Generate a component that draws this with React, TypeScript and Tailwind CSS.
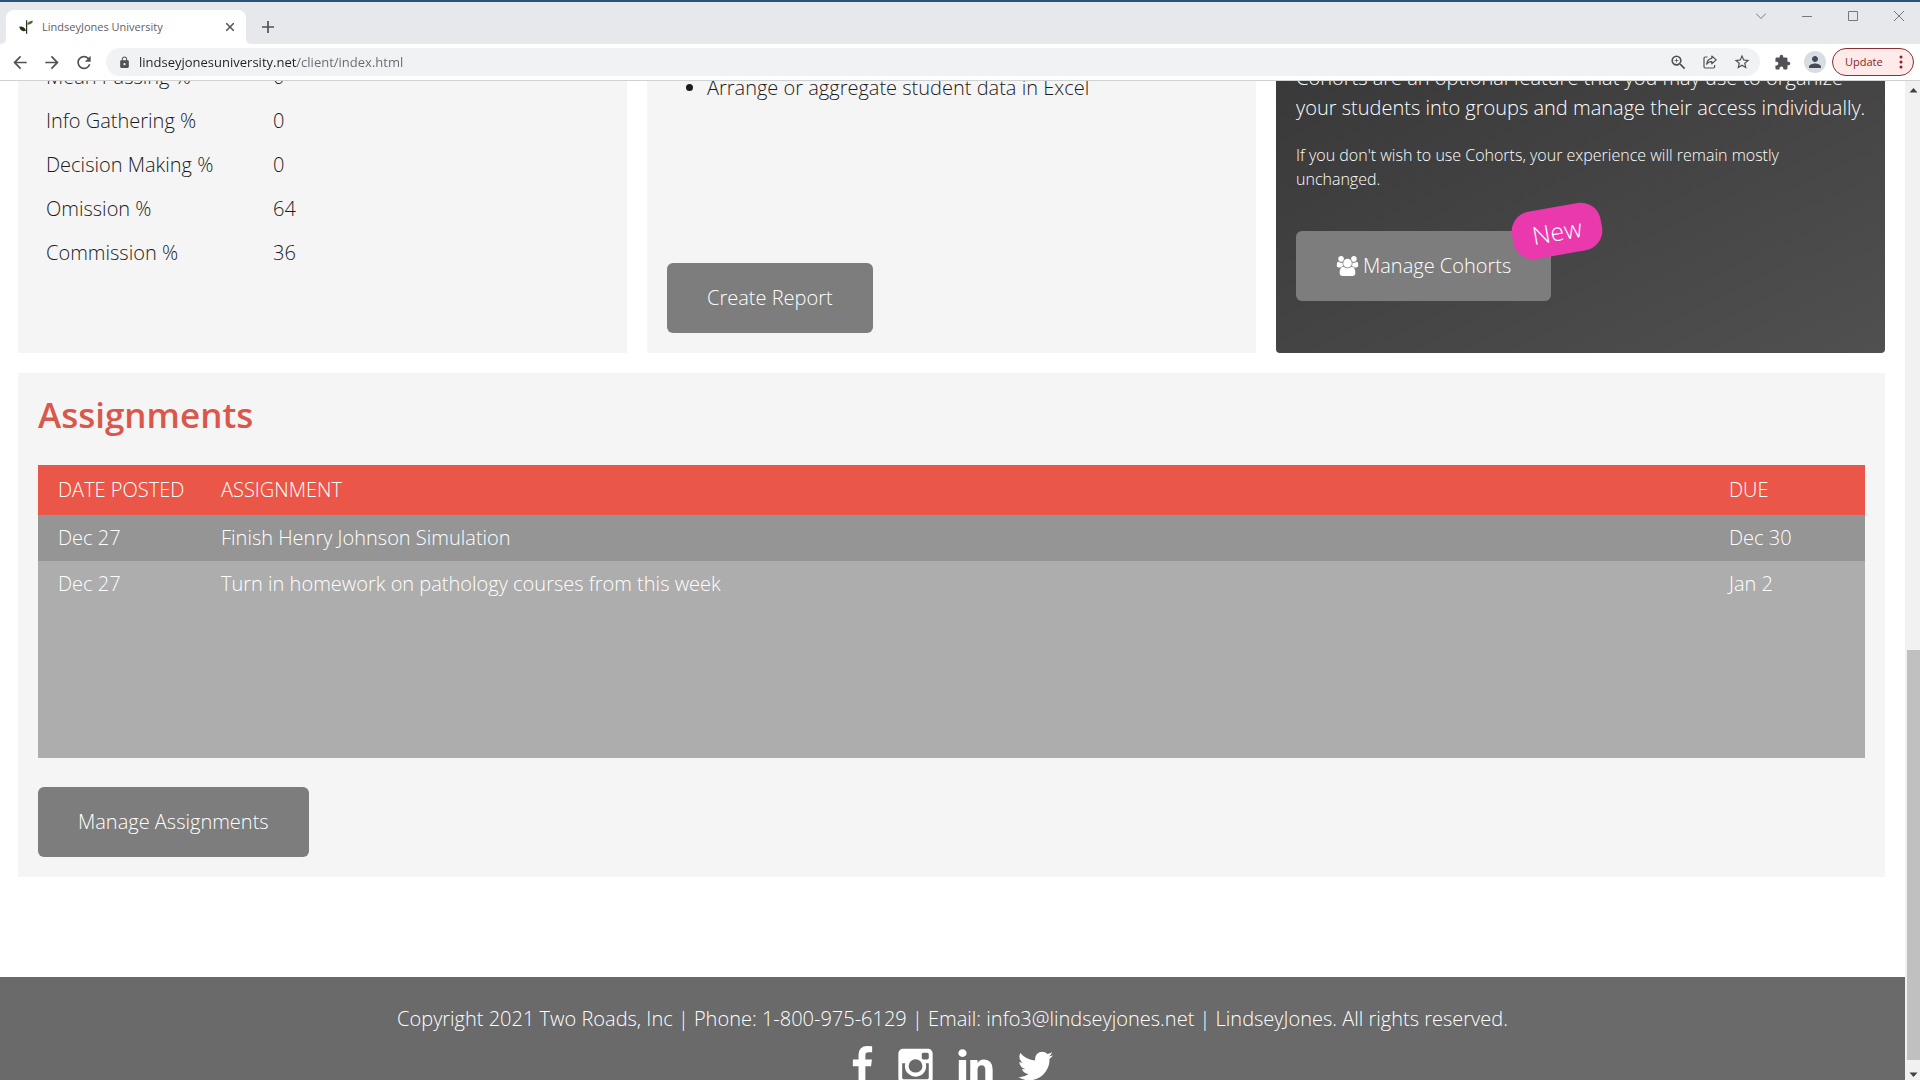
import type { ReactNode } from "react";
import {
  MdArrowBack,
  MdArrowForward,
  MdExtension,
  MdLock,
  MdPerson,
  MdRefresh,
  MdStarBorder,
  MdZoomIn,
} from "react-icons/md";

const stats = [
  { label: "Mean Passing %", value: 0 },
  { label: "Info Gathering %", value: 0 },
  { label: "Decision Making %", value: 0 },
  { label: "Omission %", value: 64 },
  { label: "Commission %", value: 36 },
];

const assignments = [
  { posted: "Dec 27", title: "Finish Henry Johnson Simulation", due: "Dec 30" },
  {
    posted: "Dec 27",
    title: "Turn in homework on pathology courses from this week",
    due: "Jan 2",
  },
];

const socials = [
  {
    name: "Facebook",
    viewBox: "441 0 941 1792",
    className: "h-10 w-[21px]",
    path: "M1343 12v264h-157q-86 0-116 36t-30 108v189h293l-39 296h-254v759h-306v-759h-255v-296h255v-218q0-186 104-288.5t277-102.5q147 0 228 12z",
  },
  {
    name: "Instagram",
    viewBox: "112 0 1568 1792",
    className: "h-10 w-[35px]",
    path: "M1490 1426v-648h-135q20 63 20 131 0 126-64 232.5t-174 168.5-240 62q-197 0-337-135.5t-140-327.5q0-68 20-131h-141v648q0 26 17.5 43.5t43.5 17.5h1069q25 0 43-17.5t18-43.5zm-284-533q0-124-90.5-211.5t-218.5-87.5q-127 0-217.5 87.5t-90.5 211.5 90.5 211.5 217.5 87.5q128 0 218.5-87.5t90.5-211.5zm284-360v-165q0-28-20-48.5t-49-20.5h-174q-29 0-49 20.5t-20 48.5v165q0 29 20 49t49 20h174q29 0 49-20t20-49zm174-208v1142q0 81-58 139t-139 58h-1142q-81 0-139-58t-58-139v-1142q0-81 58-139t139-58h1142q81 0 139 58t58 139z",
  },
  {
    name: "LinkedIn",
    viewBox: "112 0 1568 1792",
    className: "h-10 w-[35px]",
    path: "M477 625v991h-330v-991h330zm21-306q1 73-50.5 122t-135.5 49h-2q-82 0-132-49t-50-122q0-74 51.5-122.5t134.5-48.5 133 48.5 51 122.5zm1166 729v568h-329v-530q0-105-40.5-164.5t-126.5-59.5q-63 0-105.5 34.5t-63.5 85.5q-11 30-11 81v553h-329q2-399 2-647t-1-296l-1-48h329v144h-2q20-32 41-56t56.5-52 87-43.5 114.5-15.5q171 0 275 113.5t104 332.5z",
  },
  {
    name: "Twitter",
    viewBox: "112 0 1568 1792",
    className: "h-10 w-[35px]",
    path: "M1684 408q-67 98-162 167 1 14 1 42 0 130-38 259.5t-115.5 248.5-184.5 210.5-258 146-323 54.5q-271 0-496-145 35 4 78 4 225 0 401-138-105-2-188-64.5t-114-159.5q33 5 61 5 43 0 85-11-112-23-185.5-111.5t-73.5-205.5v-4q68 38 146 41-66-44-105-115t-39-154q0-88 44-163 121 149 294.5 238.5t371.5 99.5q-8-38-8-74 0-134 94.5-228.5t228.5-94.5q140 0 236 102 109-21 205-78-37 115-142 178 93-10 186-50z",
  },
];

function UsersIcon() {
  return (
    <svg viewBox="0 0 2048 1792" className="h-5 w-[23px] fill-current" aria-hidden="true">
      <path d="M657 896q-162 5-265 128h-134q-82 0-138-40.5t-56-118.5q0-353 124-353 6 0 43.5 21t97.5 42.5 119 21.5q67 0 133-23-5 37-5 66 0 139 81 256zm1071 637q0 120-73 189.5t-194 69.5h-874q-121 0-194-69.5t-73-189.5q0-53 3.5-103.5t14-109 26.5-108.5 43-97.5 62-81 85.5-53.5 111.5-20q10 0 43 21.5t73 48 107 48 135 21.5 135-21.5 107-48 73-48 43-21.5q61 0 111.5 20t85.5 53.5 62 81 43 97.5 26.5 108.5 14 109 3.5 103.5zm-1024-1277q0 106-75 181t-181 75-181-75-75-181 75-181 181-75 181 75 75 181zm704 384q0 159-112.5 271.5t-271.5 112.5-271.5-112.5-112.5-271.5 112.5-271.5 271.5-112.5 271.5 112.5 112.5 271.5zm576 225q0 78-56 118.5t-138 40.5h-134q-103-123-265-128 81-117 81-256 0-29-5-66 66 23 133 23 59 0 119-21.5t97.5-42.5 43.5-21q124 0 124 353zm-128-609q0 106-75 181t-181 75-181-75-75-181 75-181 181-75 181 75 75 181z" />
    </svg>
  );
}

function LeafIcon() {
  return (
    <svg viewBox="0 0 16 16" className="size-4" aria-hidden="true">
      <path d="M8.600 1.200v13.600" stroke="#2c2f20" strokeWidth="1.2" fill="none" />
      <path d="M1.200 7.600c3-.4 6 .8 6.800 4.200-3.600 1.400-6-.6-6.800-4.200z" fill="#23301a" />
      <path d="M9 5.600c.4-2.400 2.800-3.800 6-3.800-.4 2.800-2.800 4.200-6 3.800z" fill="#4d6b2c" />
    </svg>
  );
}

function IconButton({ label, children }: { label: string; children: ReactNode }) {
  return (
    <button
      type="button"
      aria-label={label}
      className="flex size-5 shrink-0 items-center justify-center"
    >
      {children}
    </button>
  );
}

function TabStrip() {
  return (
    <header className="flex h-11 items-end border-t-2 border-[#2b5278] bg-[#e7e8ec] pl-1.5">
      <div className="relative flex h-[34px] w-60 items-center rounded-t-lg bg-white pr-2.5 pl-3">
        <svg viewBox="0 0 6 6" className="absolute bottom-0 -left-1.5 size-1.5 fill-white">
          <path d="M6 0v6H0q6 0 6-6z" />
        </svg>
        <svg viewBox="0 0 6 6" className="absolute -right-1.5 bottom-0 size-1.5 fill-white">
          <path d="M0 0v6h6q-6 0-6-6z" />
        </svg>
        <LeafIcon />
        <span className="ml-2 flex-1 text-[11px] leading-4 text-[#5f6063]">
          LindseyJones University
        </span>
        <button type="button" aria-label="Close tab" className="p-0.5">
          <svg viewBox="0 0 8 8" className="size-2 stroke-[#505256]" strokeWidth="1.5">
            <path d="M0 0l8 8M8 0l-8 8" />
          </svg>
        </button>
      </div>
      <button type="button" aria-label="New tab" className="mb-[11px] ml-4">
        <svg viewBox="0 0 12 12" className="size-3 stroke-[#505256]" strokeWidth="1.7">
          <path d="M6 0v12M0 6h12" />
        </svg>
      </button>
      <div className="mr-4 mb-[23px] ml-auto flex items-center gap-9 stroke-[#77797d]">
        <button type="button" aria-label="Search tabs">
          <svg viewBox="0 0 10 10" className="size-2.5 fill-none stroke-inherit">
            <path d="M0 2.500l5 5 5-5" />
          </svg>
        </button>
        <button type="button" aria-label="Minimize">
          <svg viewBox="0 0 10 10" className="size-2.5 fill-none stroke-inherit">
            <path d="M0 5.500h10" />
          </svg>
        </button>
        <button type="button" aria-label="Maximize">
          <svg viewBox="0 0 10 10" className="size-2.5 fill-none stroke-inherit">
            <path d="M.5.500h9v9h-9z" />
          </svg>
        </button>
        <button type="button" aria-label="Close">
          <svg viewBox="0 0 10 10" className="size-2.5 fill-none stroke-inherit">
            <path d="M0 0l10 10M10 0l-10 10" />
          </svg>
        </button>
      </div>
    </header>
  );
}

function Toolbar() {
  return (
    <nav className="flex h-[37px] items-center border-b border-[#d0d2d2] bg-white pr-1.5 pl-2.5 text-[#505256]">
      <div className="flex items-center gap-3">
        <IconButton label="Back">
          <MdArrowBack size={21} />
        </IconButton>
        <IconButton label="Forward">
          <MdArrowForward size={21} />
        </IconButton>
        <IconButton label="Reload">
          <MdRefresh size={21} />
        </IconButton>
      </div>
      <div className="ml-3 flex h-7 flex-1 items-center rounded-full bg-[#f0f2f3] pr-2">
        <MdLock size={13} className="ml-3 shrink-0" />
        <input
          type="text"
          aria-label="Address"
          readOnly
          value="lindseyjonesuniversity.net/client/index.html"
          className="ml-2 flex-1 bg-[linear-gradient(90deg,#202124_158px,#66696d_158px)] bg-clip-text text-[13px] leading-5 text-transparent outline-none"
        />
        <div className="flex items-center gap-3">
          <IconButton label="Zoom">
            <MdZoomIn size={19} />
          </IconButton>
          <IconButton label="Share">
            <svg
              viewBox="0 0 14 14"
              className="size-3.5 fill-none stroke-current"
              strokeWidth="1.2"
              strokeLinejoin="round"
            >
              <path d="M4.500 2H2.200Q1 2 1 3.200v8.600Q1 13 2.200 13h8.200q1.200 0 1.200-1.200V10" />
              <path d="M8.800 1l4.400 3.900-4.400 3.900V6.600Q5.400 6.400 3.700 9.300 4 3.900 8.800 3.300z" />
            </svg>
          </IconButton>
          <IconButton label="Bookmark this tab">
            <MdStarBorder size={18} />
          </IconButton>
        </div>
      </div>
      <div className="ml-3 flex items-center gap-3">
        <IconButton label="Extensions">
          <MdExtension size={17} />
        </IconButton>
        <button
          type="button"
          aria-label="Profile"
          className="flex size-[22px] items-center justify-center rounded-full bg-[#d9dce3] text-[#454a58]"
        >
          <MdPerson size={18} />
        </button>
      </div>
      <button
        type="button"
        className="ml-1.5 flex h-7 w-[82px] items-center justify-between rounded-full border border-[#8a2f33] bg-[#fdeae9] pr-2.5 pl-3 text-[11px] text-[#8a2427]"
      >
        Update
        <svg viewBox="0 0 4 14" className="h-3.5 w-1 fill-current">
          <circle cx="2" cy="2" r="1.5" />
          <circle cx="2" cy="7" r="1.5" />
          <circle cx="2" cy="12" r="1.5" />
        </svg>
      </button>
    </nav>
  );
}

function ActionButton({ children }: { children: ReactNode }) {
  return (
    <button
      type="button"
      className="flex items-center gap-1 rounded-md bg-[#7d7d7d] px-10 py-5 text-xl leading-[30px] text-white"
    >
      {children}
    </button>
  );
}

function Scrollbar() {
  return (
    <div className="flex w-[15px] shrink-0 flex-col bg-[#f1f1f1] pl-0.5" aria-hidden="true">
      <svg viewBox="0 0 13 20" className="h-5 w-[13px] fill-[#404040]">
        <path d="M6.500 7l4 4.500h-8z" />
      </svg>
      <div className="flex-[549]" />
      <div className="flex-[410] bg-[#c0c0c0]" />
      <svg viewBox="0 0 13 20" className="h-5 w-[13px] fill-[#404040]">
        <path d="M6.500 17l4-4.500h-8z" />
      </svg>
    </div>
  );
}

export default function App() {
  return (
    <div className="flex h-screen flex-col overflow-hidden bg-white font-['Open_Sans',sans-serif]">
      <TabStrip />
      <Toolbar />
      <div className="flex min-h-0 flex-1">
        <div className="min-w-0 flex-1 overflow-hidden">
          {/* page is scrolled, so the first row sits partly under the toolbar */}
          <main className="-mt-[26px] flex flex-col gap-5 pr-5 pl-[18px] text-xl leading-[30px] font-light text-[#1c1c1c]">
            <div className="grid grid-cols-3 gap-5">
              <section className="bg-[#f5f5f5] px-7 pb-[78px]">
                <dl>
                  {stats.map((stat) => (
                    <div key={stat.label} className="flex h-11 items-center">
                      <dt className="w-[227px]">{stat.label}</dt>
                      <dd>{stat.value}</dd>
                    </div>
                  ))}
                </dl>
              </section>
              <section className="flex flex-col items-start justify-between bg-[#f5f5f5] px-5 pt-[18px] pb-5">
                <ul className="list-disc pl-10">
                  <li>Arrange or aggregate student data in Excel</li>
                </ul>
                <ActionButton>Create Report</ActionButton>
              </section>
              <section className="rounded bg-linear-to-br from-[#383838] to-[#505050] pt-2 pr-4 pl-5 text-white">
                <p>
                  Cohorts are an optional feature that you may use to organize your
                  students into groups and manage their access individually.
                </p>
                <p className="mt-5 mb-10 pr-10 text-base leading-6">
                  If you don't wish to use Cohorts, your experience will remain mostly
                  unchanged.
                </p>
                <div className="relative w-fit">
                  <ActionButton>
                    <UsersIcon />
                    Manage Cohorts
                  </ActionButton>
                  <span className="absolute -top-6 -right-[51px] -rotate-10 rounded-[20px] bg-[#ea38ad] px-5 py-2 text-[25px] leading-8">
                    New
                  </span>
                </div>
              </section>
            </div>

            <section className="bg-[#f5f5f5] p-5">
              <h2 className="mb-7 text-[35px] leading-11 font-semibold text-[#d9584b]">
                Assignments
              </h2>
              <div className="min-h-[293px] bg-[#adadad]">
                <table className="w-full table-fixed text-left text-white">
                  <thead className="bg-[#ea5648] uppercase">
                    <tr className="h-[50px]">
                      <th className="w-[163px] pl-5 font-light">Date Posted</th>
                      <th className="pl-5 font-light">Assignment</th>
                      <th className="w-[156px] pl-5 font-light">Due</th>
                    </tr>
                  </thead>
                  <tbody>
                    {assignments.map((item) => (
                      <tr key={item.title} className="h-[46px] odd:bg-[#959595]">
                        <td className="pl-5">{item.posted}</td>
                        <td className="pl-5">{item.title}</td>
                        <td className="pl-5">{item.due}</td>
                      </tr>
                    ))}
                  </tbody>
                </table>
              </div>
              <div className="mt-[29px]">
                <ActionButton>Manage Assignments</ActionButton>
              </div>
            </section>
          </main>

          <footer className="mt-[100px] bg-[#6a6a6a] pt-[27px] pb-10 text-center text-xl leading-[30px] font-light text-white">
            <p>
              Copyright 2021 Two Roads, Inc | Phone: 1-800-975-6129 | Email:
              info3@lindseyjones.net | LindseyJones. All rights reserved.
            </p>
            <div className="mt-3 flex justify-center gap-[25px]">
              {socials.map((social) => (
                <a key={social.name} href="#" aria-label={social.name}>
                  <svg viewBox={social.viewBox} className={social.className} fill="currentColor">
                    <path d={social.path} />
                  </svg>
                </a>
              ))}
            </div>
          </footer>
        </div>
        <Scrollbar />
      </div>
    </div>
  );
}
